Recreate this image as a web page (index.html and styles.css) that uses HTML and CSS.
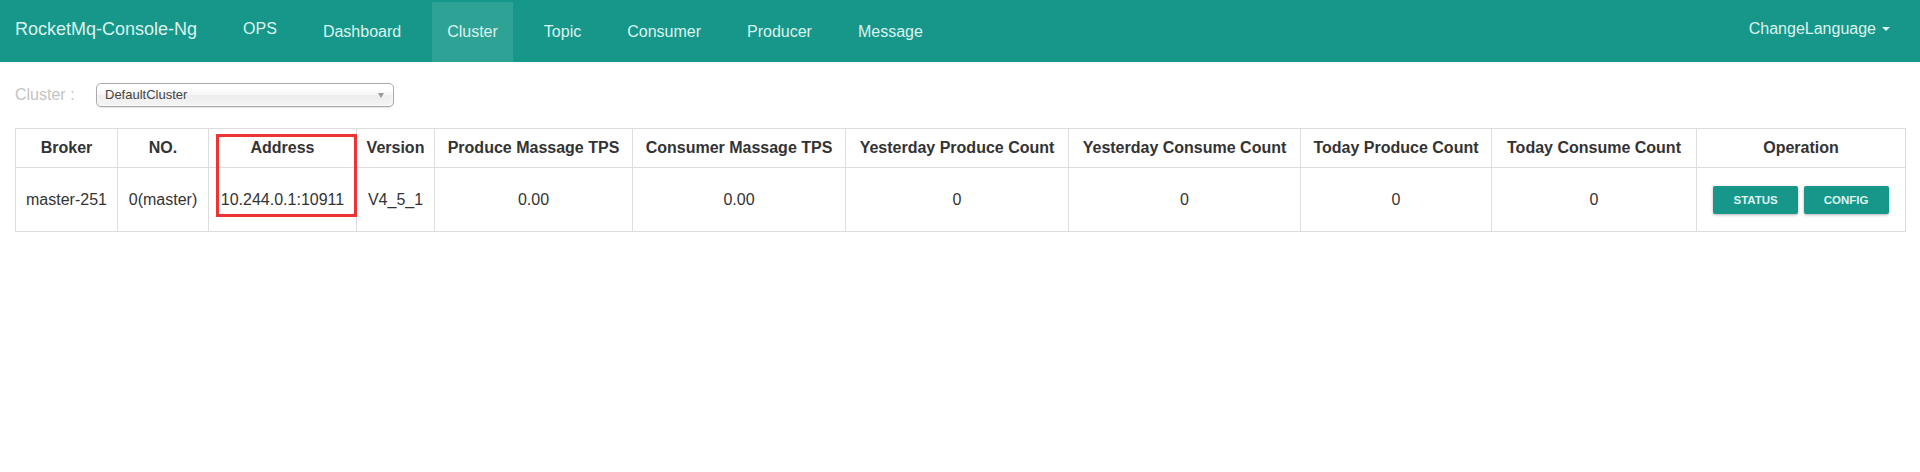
FILE: index.html
```html
<!DOCTYPE html>
<html lang="en">
<head>
  <meta charset="UTF-8">
  <title>RocketMq-Console-Ng</title>
  <link rel="stylesheet" href="styles.css">
</head>
<body>
  <nav class="navbar">
    <a class="brand" href="#">RocketMq-Console-Ng</a>
    <ul class="nav">
      <li><a class="ops" href="#">OPS</a></li>
      <li><a href="#">Dashboard</a></li>
      <li class="active"><a href="#">Cluster</a></li>
      <li><a href="#">Topic</a></li>
      <li><a href="#">Consumer</a></li>
      <li><a href="#">Producer</a></li>
      <li><a href="#">Message</a></li>
    </ul>
    <ul class="nav nav-right">
      <li><a class="lang" href="#">ChangeLanguage<span class="caret"></span></a></li>
    </ul>
  </nav>

  <main class="content">
    <div class="filter">
      <label>Cluster :</label>
      <div class="chosen">
        <span>DefaultCluster</span>
        <b class="arrow"></b>
      </div>
    </div>

    <table class="cluster-table">
      <colgroup>
        <col class="c-broker"><col class="c-no"><col class="c-addr"><col class="c-ver">
        <col class="c-ptps"><col class="c-ctps"><col class="c-yp"><col class="c-yc">
        <col class="c-tp"><col class="c-tc"><col class="c-op">
      </colgroup>
      <thead>
        <tr>
          <th>Broker</th>
          <th>NO.</th>
          <th>Address</th>
          <th>Version</th>
          <th>Produce Massage TPS</th>
          <th>Consumer Massage TPS</th>
          <th>Yesterday Produce Count</th>
          <th>Yesterday Consume Count</th>
          <th>Today Produce Count</th>
          <th>Today Consume Count</th>
          <th>Operation</th>
        </tr>
      </thead>
      <tbody>
        <tr>
          <td>master-251</td>
          <td>0(master)</td>
          <td>10.244.0.1:10911</td>
          <td>V4_5_1</td>
          <td>0.00</td>
          <td>0.00</td>
          <td>0</td>
          <td>0</td>
          <td>0</td>
          <td>0</td>
          <td>
            <div class="ops-btns">
              <button class="btn">STATUS</button>
              <button class="btn">CONFIG</button>
            </div>
          </td>
        </tr>
      </tbody>
    </table>
  </main>

  <!-- highlight drawn over the address column -->
  <div class="mark"></div>
</body>
</html>
```

FILE: styles.css
```css
:root {
  --teal: #16978a;
  --teal-light: #2ea295;
  --nav-text: #dcf3ee;
  --border: #dddddd;
  --text: #333333;
  --muted: #c4c4c4;
}
*, *::before, *::after { box-sizing: border-box; }
body {
  margin: 0;
  font-family: "Liberation Sans", Arial, sans-serif;
  font-size: 16px;
  color: var(--text);
  background: #fff;
}
a { text-decoration: none; color: inherit; }

/* navbar */
.navbar {
  display: flex;
  height: 62px;
  padding: 0 15px;
  background: var(--teal);
}
.brand {
  display: flex; align-items: center;
  margin-left: -15px;
  padding: 0 15px 4px;
  font-size: 18px; line-height: 20px;
  color: var(--nav-text);
}
.nav {
  display: flex;
  margin: 2px 0 0 8px; padding: 0;
  list-style: none;
}
.nav li { margin: 0 8px; }
.nav a {
  display: flex; align-items: center;
  height: 60px; padding: 0 15px;
  line-height: 20px;
  color: var(--nav-text);
}
.nav .active a { background: var(--teal-light); }
.nav a.ops { padding-bottom: 6px; }
.nav-right { margin-left: auto; }
.nav-right li { margin: 0; }
.nav a.lang { padding-bottom: 7px; }
.caret {
  display: inline-block;
  margin-left: 6px;
  border-top: 4px solid;
  border-left: 4px solid transparent;
  border-right: 4px solid transparent;
}

/* content */
.content { padding: 21px 15px 0; }
.filter {
  display: flex; align-items: center;
  height: 24px; margin-bottom: 21px;
}
.filter label {
  width: 81px;
  color: var(--muted);
  line-height: 24px;
}
.chosen {
  position: relative;
  width: 298px; height: 24px;
  padding-left: 8px;
  border: 1px solid #aaa; border-radius: 5px;
  background: linear-gradient(#fff 20%, #f6f6f6 50%, #eee 52%, #f4f4f4 100%);
  box-shadow: 0 0 3px #fff inset, 0 1px 1px rgba(0,0,0,0.1);
  font-size: 13px; line-height: 22px;
  color: #444;
}
.chosen .arrow {
  position: absolute; right: 9px; top: 9px;
  border-top: 5px solid #999;
  border-left: 3px solid transparent;
  border-right: 3px solid transparent;
}

/* table */
.cluster-table {
  width: 100%;
  table-layout: fixed;
  border-collapse: collapse;
  border: 1px solid var(--border);
}
.cluster-table th, .cluster-table td {
  border: 1px solid var(--border);
  padding: 8px;
  text-align: center; vertical-align: middle;
  line-height: 22px;
  white-space: nowrap;
}
.cluster-table th { font-weight: bold; }
.cluster-table td { height: 64px; padding: 0 8px; }
.c-broker { width: 102px; }
.c-no { width: 91px; }
.c-addr { width: 148px; }
.c-ver { width: 78px; }
.c-ptps { width: 198px; }
.c-ctps { width: 213px; }
.c-yp { width: 223px; }
.c-yc { width: 232px; }
.c-tp { width: 191px; }
.c-tc { width: 205px; }
.c-op { width: 209px; }

.ops-btns { display: flex; justify-content: center; gap: 6px; }
.btn {
  height: 28px; padding: 0 20px;
  border: 0; border-radius: 2px;
  background: var(--teal);
  color: #dff3ef;
  font-family: inherit; font-size: 11.5px; font-weight: bold;
  line-height: 28px;
  box-shadow: 0 1px 3px rgba(0,0,0,0.3);
}

/* red highlight box */
.mark {
  position: absolute;
  left: 216px; top: 134px;
  width: 141px; height: 83px;
  border: 3px solid #ee3333;
}
```
